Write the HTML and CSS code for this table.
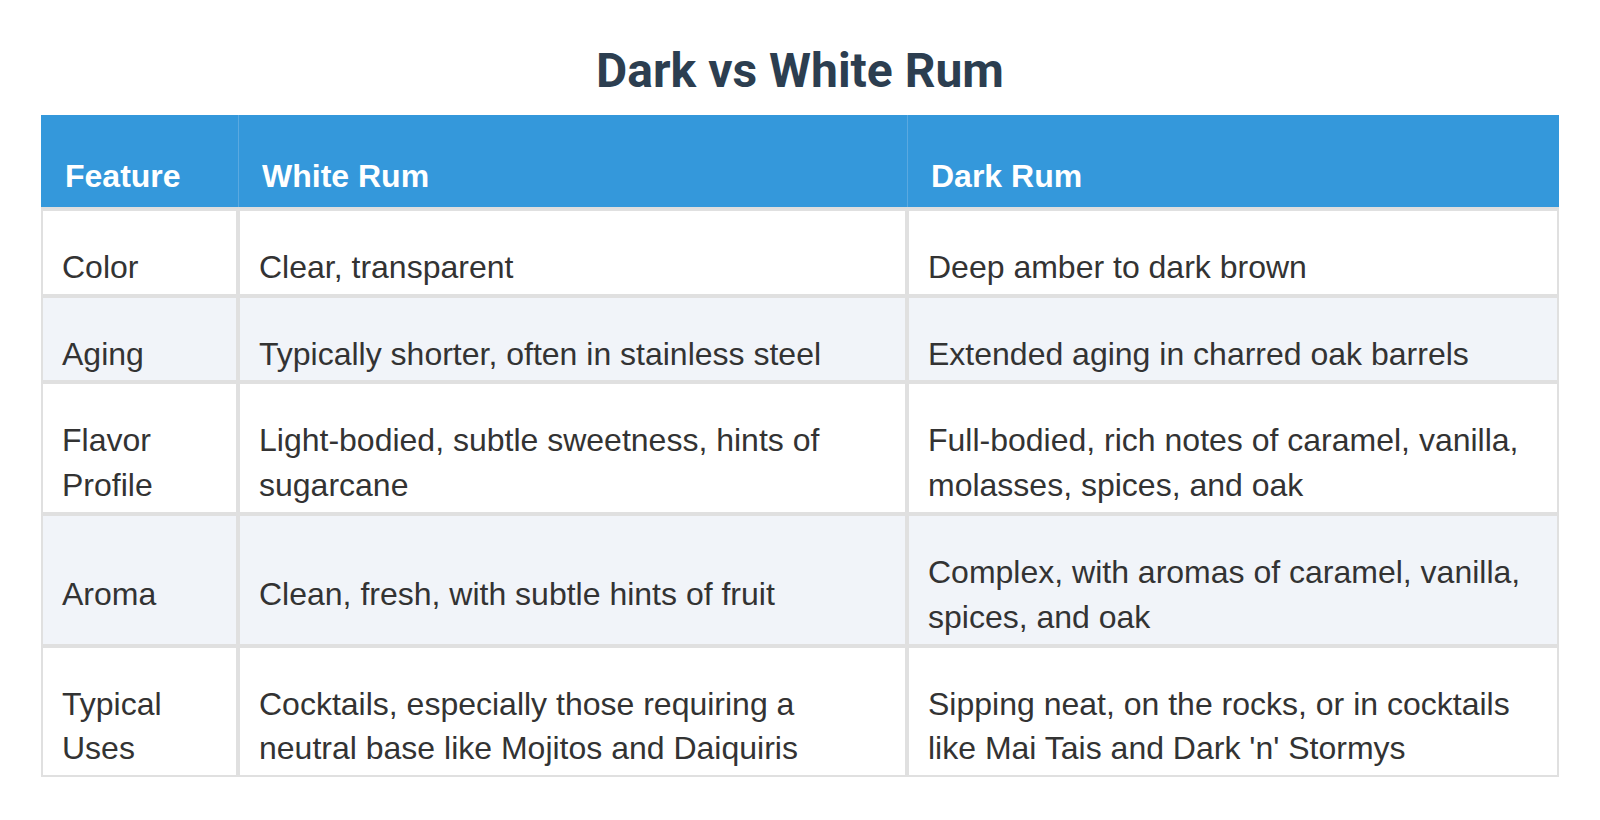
FILE: index.html
```html
<!DOCTYPE html>
<html lang="en">
<head>
<meta charset="utf-8">
<title>Dark vs White Rum</title>
<link rel="stylesheet" href="styles.css">
</head>
<body>
<main class="page">
  <h1 class="title">Dark vs White Rum</h1>
  <table class="compare">
    <colgroup>
      <col class="col-feature">
      <col class="col-white">
      <col class="col-dark">
    </colgroup>
    <thead>
      <tr>
        <th>Feature</th>
        <th>White Rum</th>
        <th>Dark Rum</th>
      </tr>
    </thead>
    <tbody>
      <tr>
        <td>Color</td>
        <td>Clear, transparent</td>
        <td>Deep amber to dark brown</td>
      </tr>
      <tr>
        <td>Aging</td>
        <td>Typically shorter, often in stainless steel</td>
        <td>Extended aging in charred oak barrels</td>
      </tr>
      <tr>
        <td>Flavor Profile</td>
        <td>Light-bodied, subtle sweetness, hints of sugarcane</td>
        <td>Full-bodied, rich notes of caramel, vanilla, molasses, spices, and oak</td>
      </tr>
      <tr>
        <td>Aroma</td>
        <td>Clean, fresh, with subtle hints of fruit</td>
        <td>Complex, with aromas of caramel, vanilla, spices, and oak</td>
      </tr>
      <tr>
        <td>Typical Uses</td>
        <td>Cocktails, especially those requiring a neutral base like Mojitos and Daiquiris</td>
        <td>Sipping neat, on the rocks, or in cocktails like Mai Tais and Dark 'n' Stormys</td>
      </tr>
    </tbody>
  </table>
</main>
</body>
</html>
```

FILE: styles.css
```css
html, body {
  margin: 0;
  padding: 0;
  background: #ffffff;
}

.page {
  padding: 0 41px;
  font-family: "Liberation Sans", Arial, sans-serif;
}

.title {
  margin: 0 0 16px;
  padding-top: 43px;
  font-family: Roboto, "Liberation Sans", sans-serif;
  font-weight: 700;
  font-size: 48px;
  line-height: 56px;
  color: #2c3e50;
  text-align: center;
}

.compare {
  width: 100%;
  table-layout: fixed;
  border-collapse: separate;
  border-spacing: 0;
  font-size: 32px;
  line-height: 44.8px;
}

.col-feature { width: 197px; }
.col-white { width: 669px; }
.col-dark { width: 652px; }

.compare th {
  background: #3498db;
  color: #ffffff;
  font-weight: 700;
  text-align: left;
  padding: 39px 24px 8px;
  border-bottom: 2px solid #dedede;
}

.compare th + th {
  box-shadow: inset 1px 0 0 #5aa9e0;
}

.compare td {
  color: #333333;
  padding: 34px 17px 4px 19px;
  border: 2px solid #e0e0e0;
  vertical-align: middle;
  background: #ffffff;
}

.compare tbody tr:nth-child(even) td {
  background: #f1f4f9;
}
```
